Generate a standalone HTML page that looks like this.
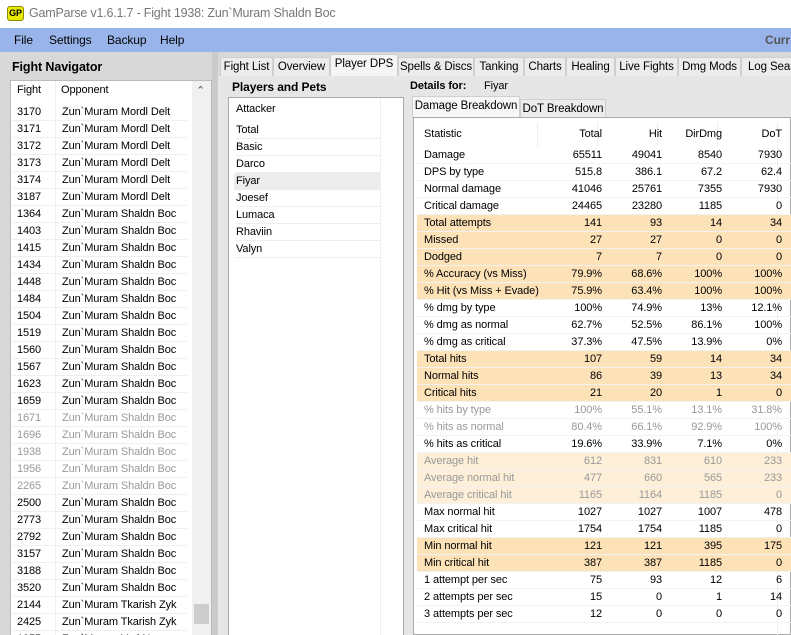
<!DOCTYPE html>
<html><head><meta charset="utf-8"><style>
*{margin:0;padding:0;box-sizing:border-box}
html{width:791px;height:635px;overflow:hidden}
body{width:791px;height:635px;overflow:hidden;background:#d8d8d8;font-family:"Liberation Sans",sans-serif;font-size:11px;letter-spacing:-0.1px;color:#000;position:relative}
.a{position:absolute}
#title{left:0;top:0;width:791px;height:28px;background:#fff}
#menu{left:0;top:28px;width:791px;height:24px;background:#99b4ea}
#menu span{position:absolute;top:5px;font-size:12px}
.tab{position:absolute;top:57px;height:19px;background:#ececec;border:1px solid #cfcfcf;border-bottom:none;padding-top:3px;text-align:center;white-space:nowrap;overflow:hidden;font-size:11.5px}
.row{position:absolute;height:17px;line-height:17px;white-space:nowrap}
.lr{border-bottom:1px solid #efefef;width:175px;left:12px}
.lr span{position:absolute}
.tr{left:417px;width:374px;border-bottom:1px solid #f2f2f2}
.tr span{position:absolute;top:0}
.hl{background:#fde2b8}
.fd{color:#999}
.hlf{background:#feefd8;color:#999}
</style></head><body>
<div class="a" id="title"></div>
<div class="a" style="left:7px;top:6px;width:17px;height:15px;background:#e8e800;border:1px solid #8a8a00;border-radius:3px;font-size:9px;font-weight:bold;line-height:13px;text-align:center">GP</div>
<div class="a" style="left:29px;top:6px;font-size:12.5px;letter-spacing:-0.2px;color:#777">GamParse v1.6.1.7 - Fight 1938: Zun`Muram Shaldn Boc</div>
<div class="a" id="menu"><span style="left:14px">File</span><span style="left:49px">Settings</span><span style="left:107px">Backup</span><span style="left:160px">Help</span><span style="left:765px;font-weight:bold;color:#555">Curr</span></div>

<div class="a" style="left:12px;top:60px;font-weight:bold;font-size:12.5px">Fight Navigator</div>
<div class="a" style="left:10px;top:80px;width:202px;height:560px;background:#fff;border:1px solid #bbb"></div>
<div class="a" style="left:192px;top:81px;width:19px;height:554px;background:#f0f0f0"></div>
<div class="a" style="left:194px;top:604px;width:15px;height:20px;background:#cdcdcd"></div>
<div class="a" style="left:196px;top:84px;font-size:11px;color:#555">&#8963;</div>
<div class="a" style="left:55px;top:81px;width:1px;height:554px;background:#eee"></div>
<div class="row" style="left:17px;top:82px">Fight</div>
<div class="row" style="left:61px;top:82px">Opponent</div>
<div id="fl"></div>

<div class="a" style="left:212px;top:52px;width:6px;height:583px;background:#cbcbcb"></div>
<div class="a" style="left:218px;top:75px;width:573px;height:560px;background:#e6e6e6;border-top:1px solid #cfcfcf"></div>
<div class="tab" style="left:220px;width:53px">Fight List</div>
<div class="tab" style="left:273px;width:57px">Overview</div>
<div class="tab" style="left:330px;width:68px;top:54px;height:22px;background:#f5f5f5">Player DPS</div>
<div class="tab" style="left:398px;width:76px">Spells &amp; Discs</div>
<div class="tab" style="left:474px;width:50px">Tanking</div>
<div class="tab" style="left:524px;width:42px">Charts</div>
<div class="tab" style="left:566px;width:49px">Healing</div>
<div class="tab" style="left:615px;width:63px">Live Fights</div>
<div class="tab" style="left:678px;width:63px">Dmg Mods</div>
<div class="tab" style="left:741px;width:60px;text-align:left;padding-left:6px">Log Search</div>

<div class="a" style="left:232px;top:80px;font-weight:bold;font-size:12px">Players and Pets</div>
<div class="a" style="left:228px;top:97px;width:176px;height:540px;background:#fff;border:1px solid #aaa"></div>
<div class="a" style="left:380px;top:98px;width:1px;height:537px;background:#eee"></div>
<div class="row" style="left:236px;top:101px">Attacker</div>
<div class="row" style="left:236px;top:122px;width:144px;border-bottom:1px solid #eee">Total</div>
<div class="row" style="left:236px;top:139px;width:144px;border-bottom:1px solid #eee">Basic</div>
<div class="row" style="left:236px;top:156px;width:144px;border-bottom:1px solid #eee">Darco</div>
<div class="row" style="left:234px;top:173px;width:146px;background:#ececec;padding-left:2px">Fiyar</div>
<div class="row" style="left:236px;top:190px;width:144px;border-bottom:1px solid #eee">Joesef</div>
<div class="row" style="left:236px;top:207px;width:144px;border-bottom:1px solid #eee">Lumaca</div>
<div class="row" style="left:236px;top:224px;width:144px;border-bottom:1px solid #eee">Rhaviin</div>
<div class="row" style="left:236px;top:241px;width:144px;border-bottom:1px solid #eee">Valyn</div>

<div class="a" style="left:410px;top:80px;font-weight:bold">Details for:</div>
<div class="a" style="left:484px;top:80px">Fiyar</div>
<div class="tab" style="left:412px;width:108px;top:96px;height:22px;background:#f7f7f7">Damage Breakdown</div>
<div class="tab" style="left:520px;width:86px;top:99px;height:19px">DoT Breakdown</div>
<div class="a" style="left:413px;top:117px;width:378px;height:518px;background:#fff;border:1px solid #aaa"></div>
<div class="a" style="left:537px;top:122px;width:1px;height:24px;background:#eee"></div>
<div class="a" style="left:597px;top:122px;width:1px;height:24px;background:#eee"></div>
<div class="a" style="left:657px;top:122px;width:1px;height:24px;background:#eee"></div>
<div class="a" style="left:717px;top:122px;width:1px;height:24px;background:#eee"></div>
<div class="a" style="left:777px;top:122px;width:1px;height:513px;background:#eee"></div>
<div id="tb"></div>
<script>
var f=[["3170","Zun`Muram Mordl Delt"],["3171","Zun`Muram Mordl Delt"],["3172","Zun`Muram Mordl Delt"],["3173","Zun`Muram Mordl Delt"],["3174","Zun`Muram Mordl Delt"],["3187","Zun`Muram Mordl Delt"],["1364","Zun`Muram Shaldn Boc"],["1403","Zun`Muram Shaldn Boc"],["1415","Zun`Muram Shaldn Boc"],["1434","Zun`Muram Shaldn Boc"],["1448","Zun`Muram Shaldn Boc"],["1484","Zun`Muram Shaldn Boc"],["1504","Zun`Muram Shaldn Boc"],["1519","Zun`Muram Shaldn Boc"],["1560","Zun`Muram Shaldn Boc"],["1567","Zun`Muram Shaldn Boc"],["1623","Zun`Muram Shaldn Boc"],["1659","Zun`Muram Shaldn Boc"],["1671","Zun`Muram Shaldn Boc",1],["1696","Zun`Muram Shaldn Boc",1],["1938","Zun`Muram Shaldn Boc",1],["1956","Zun`Muram Shaldn Boc",1],["2265","Zun`Muram Shaldn Boc",1],["2500","Zun`Muram Shaldn Boc"],["2773","Zun`Muram Shaldn Boc"],["2792","Zun`Muram Shaldn Boc"],["3157","Zun`Muram Shaldn Boc"],["3188","Zun`Muram Shaldn Boc"],["3520","Zun`Muram Shaldn Boc"],["2144","Zun`Muram Tkarish Zyk"],["2425","Zun`Muram Tkarish Zyk"],["1955","Zun`Muram Varl Ney"]];
var h="";f.forEach(function(r,i){h+='<div class="row lr" style="top:'+(104+17*i)+'px;'+(r[2]?'color:#999':'')+'"><span style="left:5px">'+r[0]+'</span><span style="left:50px">'+r[1]+'</span></div>';});
document.getElementById("fl").innerHTML=h;
var t=[["Damage","65511","49041","8540","7930"],["DPS by type","515.8","386.1","67.2","62.4"],["Normal damage","41046","25761","7355","7930"],["Critical damage","24465","23280","1185","0"],["Total attempts","141","93","14","34","hl"],["Missed","27","27","0","0","hl"],["Dodged","7","7","0","0","hl"],["% Accuracy (vs Miss)","79.9%","68.6%","100%","100%","hl"],["% Hit (vs Miss + Evade)","75.9%","63.4%","100%","100%","hl"],["% dmg by type","100%","74.9%","13%","12.1%"],["% dmg as normal","62.7%","52.5%","86.1%","100%"],["% dmg as critical","37.3%","47.5%","13.9%","0%"],["Total hits","107","59","14","34","hl"],["Normal hits","86","39","13","34","hl"],["Critical hits","21","20","1","0","hl"],["% hits by type","100%","55.1%","13.1%","31.8%","fd"],["% hits as normal","80.4%","66.1%","92.9%","100%","fd"],["% hits as critical","19.6%","33.9%","7.1%","0%"],["Average hit","612","831","610","233","hlf"],["Average normal hit","477","660","565","233","hlf"],["Average critical hit","1165","1164","1185","0","hlf"],["Max normal hit","1027","1027","1007","478"],["Max critical hit","1754","1754","1185","0"],["Min normal hit","121","121","395","175","hl"],["Min critical hit","387","387","1185","0","hl"],["1 attempt per sec","75","93","12","6"],["2 attempts per sec","15","0","1","14"],["3 attempts per sec","12","0","0","0"]];
function row(r,top,cls,hh){var s='<div class="row tr '+(cls||'')+'" style="top:'+top+'px;'+(hh?'height:'+hh+'px;line-height:'+hh+'px;border:none':'')+'"><span style="left:7px">'+r[0]+'</span>';var rs=[199,259,319,379];for(var k=1;k<5;k++)s+='<span style="left:'+(rs[k-1]-114)+'px;width:100px;text-align:right">'+r[k]+'</span>';return s+'</div>';}
var g=row(["Statistic","Total","Hit","DirDmg","DoT"],122,"",24);
t.forEach(function(r,i){g+=row(r,147+17*i,r[5]);});
document.getElementById("tb").innerHTML=g;
</script>
</body></html>
